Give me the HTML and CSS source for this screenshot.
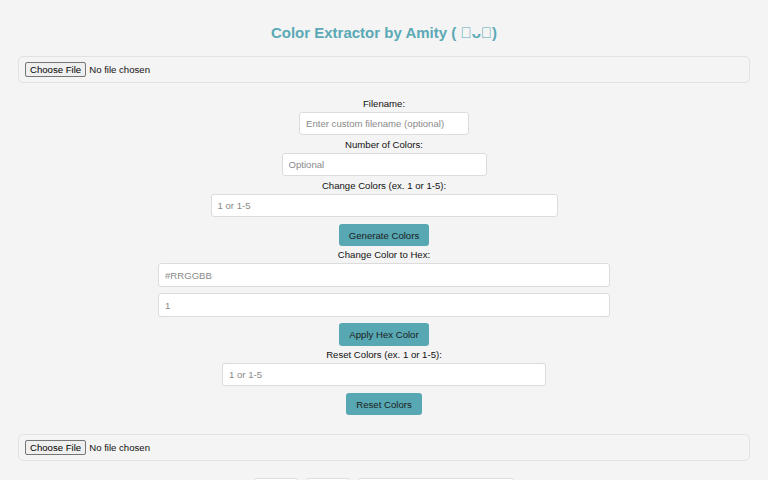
FILE: index.html
```html
<!DOCTYPE html>
<html>
<head>
<meta charset="utf-8">
<link rel="stylesheet" href="styles.css">
</head>
<body>
<h1 class="title">Color Extractor by Amity ( &#xE000;ᴗ&#xE000;)</h1>
<div class="file-box"><input type="file" class="file"></div>
<div class="form">
  <label class="lbl lbl-first">Filename:</label>
  <input class="field w1" type="text" placeholder="Enter custom filename (optional)">
  <label class="lbl">Number of Colors:</label>
  <input class="field w2" type="text" placeholder="Optional">
  <label class="lbl">Change Colors (ex. 1 or 1-5):</label>
  <input class="field w3" type="text" placeholder="1 or 1-5">
  <button class="btn">Generate Colors</button>
  <label class="lbl lbl-after-btn">Change Color to Hex:</label>
  <input class="field w4 tall" type="text" placeholder="#RRGGBB">
  <input class="field w4 tall gap6" type="text" placeholder="1">
  <button class="btn btn-tall">Apply Hex Color</button>
  <label class="lbl lbl-after-btn">Reset Colors (ex. 1 or 1-5):</label>
  <input class="field w6" type="text" placeholder="1 or 1-5">
  <button class="btn">Reset Colors</button>
</div>
<div class="file-box file-box-2"><input type="file" class="file"></div>
<div class="bottom-row">
  <span class="stub s1"></span>
  <span class="stub s2"></span>
  <span class="stub s3"></span>
</div>
</body>
</html>
```
FILE: styles.css
```css
html, body {
  margin: 0;
  padding: 0;
  background: #f4f4f4;
  font-family: "Liberation Sans", Arial, sans-serif;
  color: #111;
  overflow: hidden;
}
body {
  padding: 0 18px 0 18px;
  height: 480px;
}
.title {
  margin: 0;
  padding-top: 24px;
  height: 32px;
  line-height: 17px;
  font-size: 15px;
  font-weight: bold;
  text-align: center;
  color: #5aa9b5;
}
.file-box {
  box-sizing: border-box;
  height: 27px;
  border: 1px solid #e2e2e2;
  border-radius: 5px;
  padding: 5px 6px;
  display: flex;
  align-items: center;
}
.file {
  font-family: "Liberation Sans", Arial, sans-serif;
  font-size: 9.6px;
  color: #111;
}
.file::file-selector-button {
  font-family: "Liberation Sans", Arial, sans-serif;
  font-size: 9.6px;
  height: 15px;
  padding: 0 4px;
  margin-right: 3px;
  border: 1px solid #767676;
  border-radius: 2px;
  background: #efefef;
}
.file-box-2 {
  margin-top: 19px;
}
.form {
  display: flex;
  flex-direction: column;
  align-items: center;
}
.lbl {
  display: block;
  font-size: 9.6px;
  line-height: 13px;
  margin-top: 3px;
  margin-bottom: 2px;
}
.lbl-first {
  margin-top: 14px;
}
.lbl-after-btn {
  margin-top: 2px;
}
.field {
  box-sizing: border-box;
  height: 23px;
  margin: 0;
  padding: 0 6px;
  border: 1px solid #dcdcdc;
  border-radius: 3px;
  background: #fff;
  font-family: "Liberation Sans", Arial, sans-serif;
  font-size: 9.6px;
  outline: none;
}
.field::placeholder {
  color: #8a8a8a;
}
.tall { height: 24px; }
.gap6 { margin-top: 6px; }
.w1 { width: 170px; }
.w2 { width: 205px; }
.w3 { width: 347px; }
.w4 { width: 452px; }
.w6 { width: 324px; }
.btn {
  box-sizing: border-box;
  height: 22px;
  margin-top: 7px;
  padding: 0 10px;
  border: none;
  border-radius: 3px;
  background: #57a8b3;
  color: #1b1b1b;
  font-family: "Liberation Sans", Arial, sans-serif;
  font-size: 9.6px;
}
.btn-tall {
  height: 23px;
  margin-top: 6px;
}
.bottom-row {
  margin-top: 17px;
  display: flex;
  justify-content: center;
  gap: 8px;
}
.stub {
  display: block;
  height: 22px;
  background: #fff;
  border: 1px solid #dedede;
  border-radius: 3px;
  box-sizing: border-box;
}
.s1 { width: 44px; }
.s2 { width: 44px; }
.s3 { width: 156px; }
```
